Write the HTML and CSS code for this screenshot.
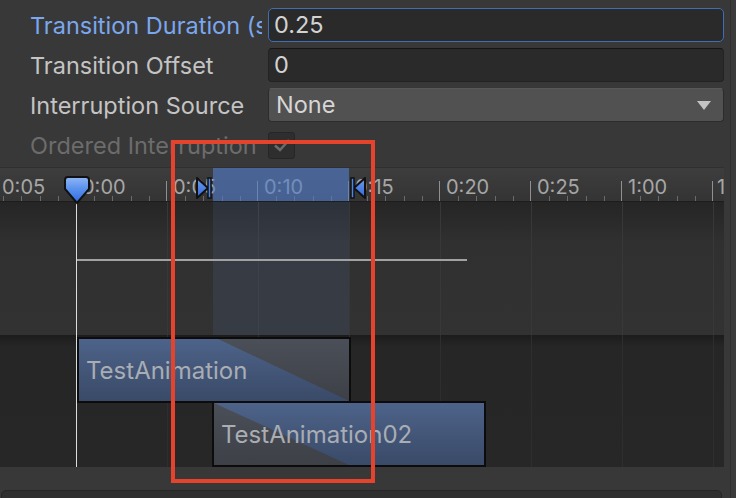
FILE: index.html
```html
<!DOCTYPE html>
<html lang="en">
<head>
  <meta charset="UTF-8">
  <title>Transition Settings</title>
  <link rel="stylesheet" href="styles.css">
</head>
<body>

  <div class="window">
    <div class="panel">

      <div class="inspector">
        <div class="row">
          <div class="label focused">Transition Duration (s)</div>
          <div class="field active">0.25</div>
        </div>
        <div class="row">
          <div class="label">Transition Offset</div>
          <div class="field">0</div>
        </div>
        <div class="row">
          <div class="label">Interruption Source</div>
          <div class="dropdown">None<span class="arrow"></span></div>
        </div>
        <div class="row">
          <div class="label disabled">Ordered Interruption</div>
          <div class="checkbox">
            <svg width="20" height="16" viewBox="0 0 20 16"><path d="M3 8.5 L8 13 L17 3" fill="none" stroke="#6b6b6b" stroke-width="2.6"/></svg>
          </div>
        </div>
      </div>

      <div class="timeline">
        <div class="ruler">
          <div class="ticks-minor"></div>
          <div class="ticks-major"></div>
          <span class="time" style="left: 2px">0:05</span>
          <span class="time" style="left: 82px">0:00</span>
          <span class="time" style="left: 173px">0:05</span>
          <span class="time" style="left: 264px">0:10</span>
          <span class="time" style="left: 355px">0:15</span>
          <span class="time" style="left: 446px">0:20</span>
          <span class="time" style="left: 537px">0:25</span>
          <span class="time" style="left: 628px">1:00</span>
          <span class="time" style="left: 717px">1</span>
          <div class="selection"></div>
        </div>

        <div class="curves">
          <div class="selection-body"></div>
          <div class="weight-line"></div>
        </div>

        <div class="tracks">
          <div class="clip clip-source"><span>TestAnimation</span></div>
          <div class="clip clip-dest"><span>TestAnimation02</span></div>
        </div>

        <div class="playhead-line"></div>

        <svg class="playhead" width="28" height="30" viewBox="0 0 28 30">
          <defs>
            <linearGradient id="ph" x1="0" y1="0" x2="0" y2="1">
              <stop offset="0" stop-color="#8fb6f5"/>
              <stop offset="0.45" stop-color="#5b92ee"/>
              <stop offset="1" stop-color="#2f6ae0"/>
            </linearGradient>
          </defs>
          <path d="M5 2 H23 Q26 2 26 5 V14 L14 28 L2 14 V5 Q2 2 5 2 Z" fill="url(#ph)" stroke="#111" stroke-width="2"/>
        </svg>

        <svg class="handle handle-start" width="18" height="24" viewBox="0 0 18 24">
          <defs>
            <linearGradient id="hd" x1="0" y1="0" x2="0" y2="1">
              <stop offset="0" stop-color="#6f9cf0"/>
              <stop offset="1" stop-color="#2f68d8"/>
            </linearGradient>
          </defs>
          <path d="M2 2 L13 12 L2 22 Z" fill="url(#hd)" stroke="#111" stroke-width="2" stroke-linejoin="round"/>
          <rect x="13" y="2" width="3" height="20" fill="#4f84e6" stroke="#111" stroke-width="1.5"/>
        </svg>

        <svg class="handle handle-end" width="18" height="24" viewBox="0 0 18 24">
          <path d="M16 2 L5 12 L16 22 Z" fill="url(#hd)" stroke="#111" stroke-width="2" stroke-linejoin="round"/>
          <rect x="2" y="2" width="3" height="20" fill="#4f84e6" stroke="#111" stroke-width="1.5"/>
        </svg>
      </div>

      <div class="footer">
        <div class="footer-box"></div>
      </div>
    </div>
    <div class="gutter"></div>
  </div>

  <div class="highlight"></div>

</body>
</html>
```

FILE: styles.css
```css
body {
  margin: 0;
  background: #383838;
  font-family: Inter, "Noto Sans", sans-serif;
  width: 736px;
  height: 498px;
  overflow: hidden;
  position: relative;
}
.window {
  display: flex;
  height: 498px;
}
.panel {
  width: 724px;
  display: flex;
  flex-direction: column;
}
.gutter {
  width: 12px;
  border-left: 6px solid #383838;
  box-shadow: inset 1px 0 0 #2e2e2e;
  background: #3b3b3b;
  box-sizing: border-box;
}

/* inspector rows */
.inspector {
  flex: none;
  padding: 8px 0 0 30px;
  display: flex;
  flex-direction: column;
  gap: 6px;
}
.row {
  display: flex;
  align-items: center;
  height: 34px;
  gap: 6px;
}
.label {
  width: 232px;
  flex: none;
  white-space: nowrap;
  overflow: hidden;
  color: #c4c4c4;
  font-size: 23.5px;
}
.label.focused {
  color: #7ba7ee;
}
.label.disabled {
  color: #6c6c6c;
}
.field {
  flex: 1;
  height: 34px;
  box-sizing: border-box;
  background: #2a2a2a;
  border: 1px solid #232323;
  border-top-color: #161616;
  border-radius: 4px;
  color: #d2d2d2;
  font-size: 23.5px;
  line-height: 32px;
  padding-left: 5px;
}
.field.active {
  border: 1.5px solid #3d6fb5;
  border-radius: 5px;
  line-height: 31px;
}
.dropdown {
  flex: 1;
  height: 34px;
  box-sizing: border-box;
  background: #515151;
  border: 1px solid #2c2c2c;
  border-top-color: #585858;
  border-radius: 4px;
  color: #d6d6d6;
  font-size: 23.5px;
  line-height: 32px;
  padding-left: 7px;
  position: relative;
}
.arrow {
  position: absolute;
  right: 12px;
  top: 12px;
  border-left: 7px solid transparent;
  border-right: 7px solid transparent;
  border-top: 9px solid #c4c4c4;
}
.checkbox {
  width: 27px;
  height: 27px;
  box-sizing: border-box;
  background: #2e2e2e;
  border: 1px solid #262626;
  border-radius: 3px;
  display: flex;
  align-items: center;
  justify-content: center;
}

/* timeline */
.timeline {
  flex: none;
  margin-top: 5px;
  position: relative;
  height: 300px;
  overflow: hidden;
}
.ruler {
  position: relative;
  height: 35px;
  box-sizing: border-box;
  border-top: 1px solid #303030;
  border-bottom: 1px solid #1d1d1d;
  background: linear-gradient(#3d3d3d, #343434);
  overflow: hidden;
}
.ticks-major {
  position: absolute;
  left: 0;
  right: 0;
  bottom: 0;
  height: 20px;
  background: linear-gradient(to right, #909090 0 1.5px, transparent 1.5px) 75px 0 / 91px 100% repeat-x;
}
.ticks-minor {
  position: absolute;
  left: 0;
  right: 0;
  bottom: 0;
  height: 5px;
  background:
    linear-gradient(to right, transparent 18.2px, #6a6a6a 18.2px 19.2px, transparent 19.2px 36.4px, #6a6a6a 36.4px 37.4px, transparent 37.4px 54.6px, #6a6a6a 54.6px 55.6px, transparent 55.6px 72.8px, #6a6a6a 72.8px 73.8px, transparent 73.8px) 76px 0 / 91px 100% repeat-x;
}
.time {
  position: absolute;
  top: 8px;
  font-size: 20px;
  line-height: 22px;
  color: #a6a6a6;
}
.selection {
  position: absolute;
  left: 213px;
  width: 136px;
  top: 0;
  bottom: 0;
  background: rgba(82, 126, 204, 0.62);
}
.curves {
  position: relative;
  height: 133px;
  background:
    linear-gradient(to right, #383838 0 1px, transparent 1px) 76px 0 / 91px 100% repeat-x,
    linear-gradient(#252525, #303030 40px, #323232);
}
.selection-body {
  position: absolute;
  left: 213px;
  width: 136px;
  top: 0;
  bottom: 0;
  background: rgba(80, 110, 170, 0.16);
}
.weight-line {
  position: absolute;
  left: 76px;
  width: 391px;
  top: 57px;
  height: 2px;
  background: #a2a2a2;
}
.tracks {
  position: relative;
  height: 132px;
  background:
    linear-gradient(to right, #2e2e2e 0 1px, transparent 1px) 76px 0 / 91px 100% repeat-x,
    linear-gradient(#1c1c1c, #262626 12px, #272727);
}
.clip {
  position: absolute;
  width: 274px;
  height: 66px;
  box-sizing: border-box;
  border: 2px solid #0c0c0c;
  background: linear-gradient(#4d6389, #3a4a68);
  overflow: hidden;
  display: flex;
  align-items: center;
}
.clip::before {
  content: "";
  position: absolute;
  inset: 0;
  background: linear-gradient(#4b4f57, #3d4047);
}
.clip-source {
  left: 77px;
  top: 2px;
}
.clip-source::before {
  clip-path: polygon(51.5% 0, 100% 0, 100% 100%);
}
.clip-dest {
  left: 212px;
  top: 66px;
}
.clip-dest::before {
  clip-path: polygon(0 0, 50% 100%, 0 100%);
}
.clip span {
  position: relative;
  color: #a9adb4;
  font-size: 24px;
  padding-left: 7px;
}
.playhead-line {
  position: absolute;
  left: 76px;
  top: 35px;
  bottom: 0;
  width: 1px;
  background: #dcdcdc;
}
.playhead {
  position: absolute;
  left: 63px;
  top: 8px;
}
.handle {
  position: absolute;
  top: 9px;
}
.handle-start {
  left: 195px;
}
.handle-end {
  left: 349px;
}

/* bottom */
.footer {
  flex: 1;
  min-height: 0;
  padding-top: 23px;
}
.footer-box {
  height: 20px;
  margin-left: 1px;
  margin-right: 2px;
  border: 1px solid #262626;
  border-radius: 5px;
  background: #2f2f2f;
}

/* annotation frame */
.highlight {
  position: absolute;
  left: 171px;
  top: 140px;
  width: 204px;
  height: 343px;
  box-sizing: border-box;
  border: 4px solid #e5432b;
}
```
